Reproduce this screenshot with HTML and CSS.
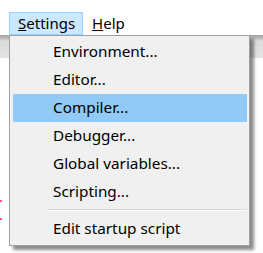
FILE: index.html
```html
<!DOCTYPE html>
<html lang="en">

<head>
    <meta charset="UTF-8">
    <title>Settings menu</title>
    <link rel="stylesheet" href="styles.css">
</head>

<body>
    <div class="menubar">
        <span class="menubar-item active"><u>S</u>ettings</span>
        <span class="menubar-item"><u>H</u>elp</span>
    </div>
    <div class="toolbar"></div>

    <span class="dot dot-1"></span>
    <span class="dot dot-2"></span>

    <ul class="dropdown">
        <li class="item">Environment...</li>
        <li class="item">Editor...</li>
        <li class="item selected">Compiler...</li>
        <li class="item">Debugger...</li>
        <li class="item">Global variables...</li>
        <li class="item">Scripting...</li>
        <li class="separator"></li>
        <li class="item">Edit startup script</li>
    </ul>
</body>

</html>
```

FILE: styles.css
```css
body {
    margin: 0;
    background: #ffffff;
    font-family: "Noto Sans", sans-serif;
    font-size: 15px;
    color: #000000;
    position: relative;
    height: 253px;
    overflow: hidden;
}

.menubar {
    display: flex;
    height: 35px;
    padding-left: 9px;
    align-items: flex-end;
}

.menubar-item {
    height: 21px;
    line-height: 20px;
    padding: 0 7px 0 8px;
    border: 1px solid transparent;
}

.menubar-item.active {
    background: #cce8ff;
    border-color: #99d1ff;
}

.toolbar {
    height: 23px;
    background: linear-gradient(#a3a3a3 0, #b9b9b9 3px, #dcdcdc 6px, #e3e3e3 100%);
}

.dot {
    position: absolute;
    left: 0;
    width: 2px;
    height: 2px;
    background: #ff4f9a;
}

.dot-1 {
    top: 200px;
}

.dot-2 {
    top: 218px;
}

.dropdown {
    position: absolute;
    left: 9px;
    top: 35px;
    width: 239px;
    margin: 0;
    padding: 2px 0;
    list-style: none;
    background: #f0f0f0;
    border: 1px solid #a0a0a0;
    box-shadow: 4px 4px 3px rgba(0, 0, 0, 0.45);
}

.item {
    height: 28px;
    line-height: 27px;
    margin: 0 2px 0 3px;
    padding-left: 40px;
    font-size: 15.3px;
}

.item.selected {
    background: #91c9f7;
}

.separator {
    height: 1px;
    margin: 3px 2px 4px 38px;
    background: #d7d7d7;
    border-bottom: 1px solid #ffffff;
}
```
